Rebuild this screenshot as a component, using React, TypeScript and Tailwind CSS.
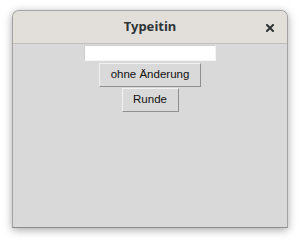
export default function App() {
    return (
        <div className="h-[243px] w-[300px] bg-white pl-[12px] pt-[10px]">
            <div className="flex h-[218px] w-[276px] flex-col overflow-hidden rounded-t-[7px] border border-[#a3a3a3] border-b-[#8c8c8c] bg-[#d9d9d9] shadow-[0_2px_8px_rgba(0,0,0,0.35)]">
                <div className="relative flex h-[33px] shrink-0 items-center justify-center border-b border-[#c2beb9] bg-[#e2dfdb]">
                    <span className="font-['Noto_Sans',sans-serif] text-[13px] font-bold text-[#2e3436]">
                        Typeitin
                    </span>
                    <svg
                        className="absolute right-[13px] top-[13px]"
                        width="8"
                        height="8"
                        viewBox="0 0 8 8"
                    >
                        <path d="M1 1L7 7M7 1L1 7" stroke="#2e3436" strokeWidth="2" strokeLinecap="square" />
                    </svg>
                </div>

                <div className="flex flex-col items-center pt-[1px] font-['Liberation_Sans',sans-serif] text-[11.5px] text-[#111]">
                    <div className="h-[16px] w-[132px] border border-[#cfcfcf] border-b-[#f4f4f4] border-r-[#f4f4f4] bg-white" />
                    <button className="mt-[2px] flex h-[24px] w-[102px] items-center justify-center border border-[#f2f2f2] border-b-[#8f8f8f] border-r-[#8f8f8f] bg-[#d9d9d9]">
                        ohne Änderung
                    </button>
                    <button className="mt-[1px] flex h-[24px] w-[57px] items-center justify-center border border-[#f2f2f2] border-b-[#8f8f8f] border-r-[#8f8f8f] bg-[#d9d9d9]">
                        Runde
                    </button>
                </div>
            </div>
        </div>
    )
}
